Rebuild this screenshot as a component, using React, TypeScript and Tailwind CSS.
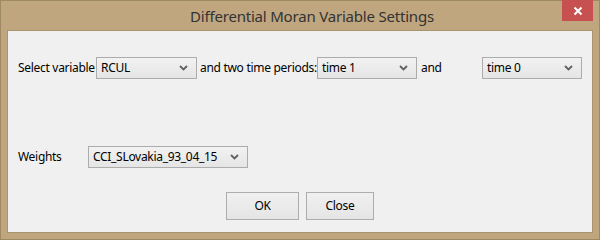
const font = "font-['Segoe_UI','Noto_Sans',sans-serif]";

const Chevron = () => (
  <svg width="9" height="6" viewBox="0 0 9 6" className="shrink-0">
    <path d="M1 1 L4.5 4.5 L8 1" fill="none" stroke="#606060" strokeWidth="1.8" />
  </svg>
);

const Combo = ({ value, width }: { value: string; width: string }) => (
  <div
    className={`flex h-[22px] ${width} shrink-0 items-center justify-between border border-[#acacac] bg-gradient-to-b from-[#f2f2f2] to-[#e5e5e5] pl-[4px] pr-[8px] text-[12px] text-black`}
  >
    <span className="whitespace-nowrap">{value}</span>
    <Chevron />
  </div>
);

const Button = ({ label, width }: { label: string; width: string }) => (
  <div
    className={`flex h-[28px] ${width} items-center justify-center border border-[#adadad] bg-gradient-to-b from-[#f0f0f0] to-[#e5e5e5] text-[12px] text-black`}
  >
    {label}
  </div>
);

export default function App() {
  return (
    <div className={`h-[240px] w-[600px] border border-[#9e8965] bg-[#bfa67f] ${font}`}>
      <div className="flex h-[29px] items-start">
        <div className="flex-1" />
        <div className="mt-[6px] whitespace-nowrap pl-[30px] text-[15px] leading-[18px] tracking-[-0.2px] text-[#333333]">
          Differential Moran Variable Settings
        </div>
        <div className="flex flex-1 justify-end pr-[6px]">
          <div className="-mt-px flex h-[21px] w-[31px] items-center justify-center bg-[#c75050]">
            <svg width="10" height="10" viewBox="0 0 10 10">
              <path d="M1.5 1.5 L8.5 8.5 M8.5 1.5 L1.5 8.5" stroke="white" strokeWidth="2" />
            </svg>
          </div>
        </div>
      </div>
      <div className="mx-[6px] flex h-[203px] flex-col border border-[#a8936f] bg-[#f0f0f0] text-[12px] tracking-[-0.3px] text-black">
        <div className="mt-[26px] flex h-[22px] items-center whitespace-nowrap pl-[10px]">
          <span className="w-[78px] shrink-0">Select variable</span>
          <Combo value="RCUL" width="w-[101px]" />
          <span className="w-[120px] shrink-0 pl-[3px]">and two time periods:</span>
          <Combo value="time 1" width="w-[100px]" />
          <span className="w-[65px] shrink-0 pl-[4px]">and</span>
          <Combo value="time 0" width="w-[100px]" />
        </div>
        <div className="mt-[67px] flex h-[22px] items-center whitespace-nowrap pl-[10px]">
          <span className="w-[70px] shrink-0">Weights</span>
          <Combo value="CCI_SLovakia_93_04_15" width="w-[160px]" />
        </div>
        <div className="mt-[24px] flex justify-center gap-[7px]">
          <Button label="OK" width="w-[73px]" />
          <Button label="Close" width="w-[68px]" />
        </div>
      </div>
    </div>
  );
}
